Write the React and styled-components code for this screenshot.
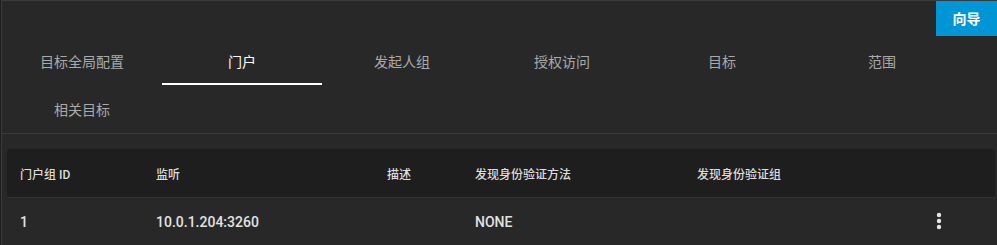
import React from 'react';
import styled, { createGlobalStyle } from 'styled-components';

const GlobalStyle = createGlobalStyle`
  html, body {
    margin: 0;
    padding: 0;
    background: #1f1f1f;
  }
  body {
    font-family: Roboto, 'Noto Sans CJK SC', sans-serif;
    overflow: hidden;
  }
`;

const Card = styled.div`
  margin-left: 1px;
  width: 996px;
  height: 245px;
  box-sizing: border-box;
  background: #282828;
  border-top: 1px solid #3a3a3a;
  border-left: 1px solid #3a3a3a;
  overflow: hidden;
`;

const Toolbar = styled.div`
  display: flex;
  justify-content: flex-end;
  height: 36px;
`;

const WizardButton = styled.button`
  width: 61px;
  height: 36px;
  margin-top: -1px;
  border: none;
  background: #0095d5;
  color: #ffffff;
  font-family: Roboto, 'Noto Sans CJK SC', sans-serif;
  font-size: 14px;
  font-weight: 700;
  cursor: pointer;
`;

const TabBar = styled.nav`
  display: flex;
  flex-wrap: wrap;
  border-bottom: 1px solid #3a3a3a;
`;

const Tab = styled.div`
  width: 160px;
  height: 48px;
  box-sizing: border-box;
  display: flex;
  align-items: center;
  justify-content: center;
  font-size: 14px;
  color: ${p => (p.$active ? '#ffffff' : '#aaaaaa')};
  border-bottom: 2px solid ${p => (p.$active ? '#ffffff' : 'transparent')};
  padding-top: 2px;
`;

const Content = styled.div`
  padding: 15px 2px 0 5px;
`;

const Table = styled.div`
  background: #282828;
  border-radius: 4px 4px 0 0;
  overflow: hidden;
`;

const Row = styled.div`
  display: grid;
  grid-template-columns: 136px 231px 88px 222px 1fr 90px;
  height: 48px;
  align-items: center;
  background: ${p => (p.$head ? '#1e1e1e' : '#282828')};
  border-bottom: 1px solid #333333;
  color: ${p => (p.$head ? '#dddddd' : '#e2e2e2')};
  font-size: ${p => (p.$head ? '12px' : '14px')};
  font-weight: 500;
`;

const Cell = styled.div`
  padding-left: 13px;
  white-space: nowrap;
`;

const ActionCell = styled.div`
  padding-left: 31px;
  display: flex;
  align-items: center;
  margin-top: -2px;
`;

const tabs = ['目标全局配置', '门户', '发起人组', '授权访问', '目标', '范围', '相关目标'];
const headers = ['门户组 ID', '监听', '描述', '发现身份验证方法', '发现身份验证组'];
const rows = [['1', '10.0.1.204:3260', '', 'NONE', '']];

const Kebab = () => (
  <svg width="6" height="18" viewBox="0 0 6 18">
    <circle cx="3" cy="3" r="2.2" fill="#e6e6e6" />
    <circle cx="3" cy="9" r="2.2" fill="#e6e6e6" />
    <circle cx="3" cy="15" r="2.2" fill="#e6e6e6" />
  </svg>
);

const App = () => {
  return (
    <>
      <GlobalStyle />
      <Card>
        <Toolbar>
          <WizardButton>向导</WizardButton>
        </Toolbar>
        <TabBar>
          {tabs.map(t => (
            <Tab key={t} $active={t === '门户'}>{t}</Tab>
          ))}
        </TabBar>
        <Content>
          <Table>
            <Row $head>
              {headers.map(h => <Cell key={h}>{h}</Cell>)}
              <Cell />
            </Row>
            {rows.map((r, i) => (
              <Row key={i}>
                {r.map((c, j) => <Cell key={j}>{c}</Cell>)}
                <ActionCell><Kebab /></ActionCell>
              </Row>
            ))}
          </Table>
        </Content>
      </Card>
    </>
  );
};

export default App;
